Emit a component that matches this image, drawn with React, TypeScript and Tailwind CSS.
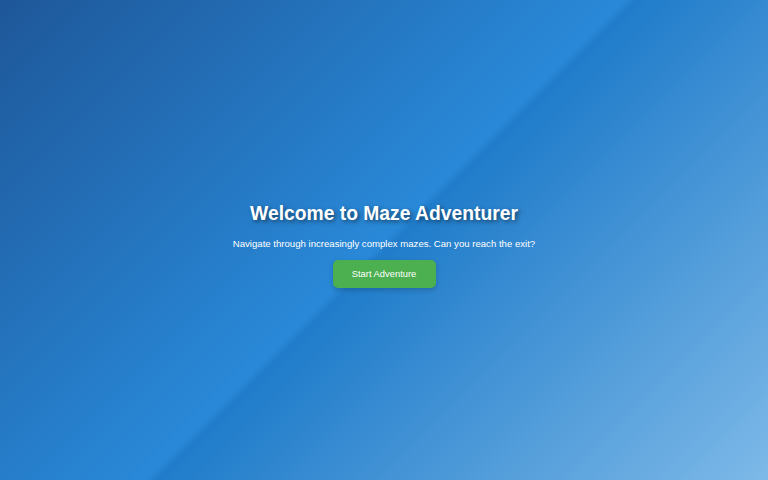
export default function App() {
  return (
    <div
      className="w-full h-screen flex flex-col items-center justify-center pt-[12px] text-white bg-[linear-gradient(135deg,#1e5799_0%,#2989d8_50%,#207cca_51%,#7db9e8_100%)]"
      style={{ fontFamily: '"Liberation Sans", Arial, sans-serif' }}
    >
      <h1 className="text-[19.3px] font-bold leading-none [text-shadow:2px_2px_4px_rgba(0,0,0,0.5)]">
        Welcome to Maze Adventurer
      </h1>
      <p className="mt-[16px] text-[9.6px] leading-none">
        Navigate through increasingly complex mazes. Can you reach the exit?
      </p>
      <button className="mt-[12px] h-[28px] w-[103px] rounded-[5px] bg-[#4CAF50] text-[9.4px] text-white shadow-[0_2px_5px_rgba(0,0,0,0.2)]">
        Start Adventure
      </button>
    </div>
  );
}
